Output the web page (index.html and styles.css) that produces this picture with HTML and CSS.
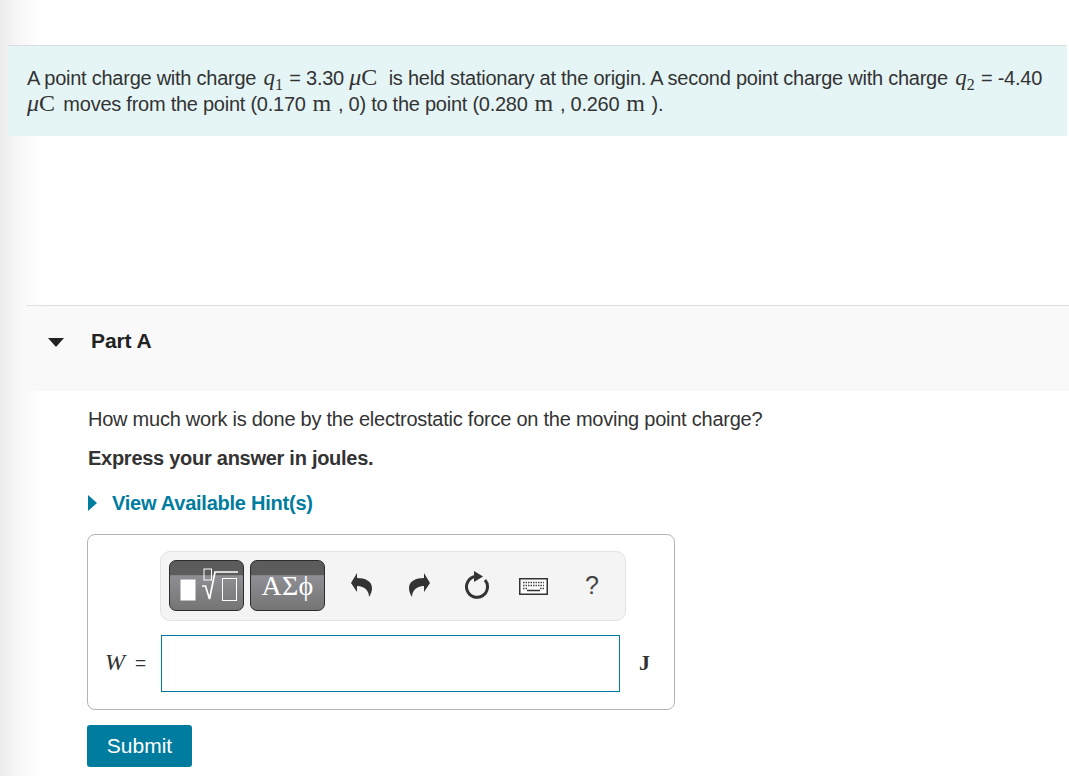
FILE: index.html
```html
<!DOCTYPE html>
<html lang="en">
<head>
    <meta charset="UTF-8">
    <title>Part A</title>
    <link rel="stylesheet" href="styles.css">
</head>
<body>
    <div class="intro">
        A point charge with charge <span class="math var"><i>q</i><sub>1</sub></span> = 3.30 <span class="math unit"><i>μ</i>C</span> is held stationary at the origin. A second point charge with charge <span class="math var"><i>q</i><sub>2</sub></span> = -4.40<br>
        <span class="math unit first"><i>μ</i>C</span> moves from the point (0.170 <span class="math metre">m</span> , 0) to the point (0.280 <span class="math metre">m</span> , 0.260 <span class="math metre">m</span> ).
    </div>

    <div class="part">
        <div class="part-head">
            <span class="part-arrow"></span>
            <h2>Part A</h2>
        </div>
        <div class="part-body">
            <p class="question">How much work is done by the electrostatic force on the moving point charge?</p>
            <p class="instruction">Express your answer in joules.</p>
            <div class="hint"><span class="hint-arrow"></span>View Available Hint(s)</div>

            <div class="answer">
                <div class="toolbar">
                    <div class="tool-btn tool-templates">
                        <svg width="73" height="49" viewBox="0 0 73 49">
                            <rect x="10.500" y="18.500" width="15" height="21" fill="#fff"/>
                            <rect x="34" y="8" width="7.500" height="11" fill="none" stroke="#fff" stroke-width="1"/>
                            <path d="M32 25l3.500 0 4 13 5.500-27h23" fill="none" stroke="#fff" stroke-width="1.700"/>
                            <rect x="52.500" y="17.500" width="14" height="22" fill="none" stroke="#fff" stroke-width="1"/>
                        </svg>
                    </div>
                    <div class="tool-btn tool-greek">ΑΣϕ</div>
                    <div class="tool-icons">
                        <svg class="icon-undo" width="21" height="24" viewBox="0 0 21 24"><path d="M0 10 6 0v5c8 0 15 3 15 10 0 3-1 6-3 9 0-6-4-11-12-11v6z" fill="#333"/></svg>
                        <svg class="icon-redo" width="21" height="24" viewBox="0 0 21 24"><path d="M21 10 15 0v5C7 5 0 8 0 15c0 3 1 6 3 9 0-6 4-11 12-11v6z" fill="#333"/></svg>
                        <svg class="icon-reset" width="26" height="28" viewBox="0 0 26 28"><path d="M11 5.500A10.500 10.500 0 1 0 21 9" fill="none" stroke="#333" stroke-width="3"/><path d="M10 0l9 5.500-9 5.500z" fill="#333"/></svg>
                        <svg class="icon-keyboard" width="29" height="17" viewBox="0 0 29 17">
                            <rect x=".75" y=".75" width="27.500" height="15.500" fill="#fff" stroke="#333" stroke-width="1.500"/>
                            <path d="M4 4.500h21M4 7.500h21M4 10.500h4M21 10.500h4" stroke="#444" stroke-width="1.500" stroke-dasharray="1.500 1"/>
                            <path d="M8 12.500h13" stroke="#333" stroke-width="1.500"/>
                        </svg>
                        <span class="icon-help">?</span>
                    </div>
                </div>
                <div class="answer-row">
                    <label class="answer-label"><i>W</i><span>=</span></label>
                    <input class="answer-input" type="text">
                    <span class="answer-unit">J</span>
                </div>
            </div>

            <button class="submit">Submit</button>
        </div>
    </div>
</body>
</html>
```

FILE: styles.css
```css
html, body {
    margin: 0;
    height: 776px;
    overflow: hidden;
}
body {
    padding: 45px 0 0 8px;
    box-sizing: border-box;
    font-family: "Liberation Sans", Arial, sans-serif;
    font-size: 20px;
    color: #333;
    letter-spacing: -0.24px;
    background: linear-gradient(to right, #ececec 0, #f6f6f6 16px, #fff 42px);
}
.intro {
    height: 91px;
    box-sizing: border-box;
    margin-right: 2px;
    padding: 19px 20px 0 19px;
    line-height: 26px;
    letter-spacing: -0.25px;
    background: #e5f5f6;
    border-top: 1px solid #ddd;
    white-space: nowrap;
}
.math {
    font-family: "Liberation Serif", "Times New Roman", serif;
    font-size: 22px;
    line-height: 0;
    letter-spacing: 0;
}
.math i {
    font-size: 23px;
}
.math sub {
    font-size: 16px;
    line-height: 0;
}
.var {
    margin: 0 1px 0 2px;
}
.unit {
    margin: 0 6px 0 0;
    font-size: 24px;
}
.unit i {
    font-size: 24px;
}
.unit.first {
    margin: 0 3px 0 0;
}
.metre {
    margin: 0 1.500px;
    font-size: 24px;
}
.part {
    margin: 169px 0 0 19px;
}
.part-head {
    display: flex;
    align-items: flex-start;
    height: 86px;
    box-sizing: border-box;
    padding-top: 23px;
    background: #f9f9f9;
    border-top: 1px solid #e0e0e0;
}
.part-arrow {
    width: 0;
    height: 0;
    margin: 9px 27px 0 21px;
    border-left: 8px solid transparent;
    border-right: 8px solid transparent;
    border-top: 9px solid #222;
}
.part-head h2 {
    margin: 0;
    font-size: 21px;
    line-height: 24px;
    font-weight: bold;
    letter-spacing: -0.1px;
    color: #222;
}
.part-body {
    padding: 16px 0 0 60px;
}
.part-body p {
    margin: 0 0 0 1px;
    line-height: 24px;
}
.instruction {
    padding-top: 15px;
    font-weight: bold;
    letter-spacing: -0.27px;
}
.hint {
    display: flex;
    align-items: center;
    margin: 21px 0 0 1px;
    line-height: 24px;
    font-weight: bold;
    color: #007c9e;
}
.hint-arrow {
    width: 0;
    height: 0;
    margin-right: 15px;
    border-top: 8px solid transparent;
    border-bottom: 8px solid transparent;
    border-left: 9px solid #007c9e;
}
.answer {
    width: 588px;
    height: 176px;
    box-sizing: border-box;
    margin-top: 19px;
    padding-top: 16px;
    background: #fff;
    border: 1px solid #b3b3b3;
    border-radius: 8px;
}
.toolbar {
    display: flex;
    align-items: center;
    width: 466px;
    height: 70px;
    box-sizing: border-box;
    margin-left: 72px;
    padding: 0 0 2px 8px;
    background: #f4f4f4;
    border: 1px solid #e2e2e2;
    border-radius: 10px;
}
.tool-btn {
    width: 75px;
    height: 51px;
    box-sizing: border-box;
    margin-right: 6px;
    background: linear-gradient(to bottom, #5c5c5c 0, #5c5c5c 28%, #8e8e94 30%, #757575 100%);
    border: 1px solid #2c2c2c;
    border-radius: 7px;
    color: #fff;
}
.tool-templates svg {
    display: block;
}
.tool-greek {
    font-family: "Liberation Serif", serif;
    font-size: 28px;
    letter-spacing: 0.3px;
    line-height: 49px;
    text-align: center;
}
.tool-icons {
    display: flex;
    align-items: center;
    margin-left: 20px;
}
.icon-redo {
    margin-left: 37px;
}
.icon-reset {
    margin-left: 34px;
}
.icon-keyboard {
    margin: 3px 0 0 29px;
}
.icon-help {
    margin-left: 37px;
    font-size: 25px;
    color: #444;
}
.answer-row {
    display: flex;
    align-items: center;
    margin-top: 14px;
}
.answer-label {
    display: flex;
    align-items: center;
    width: 73px;
    box-sizing: border-box;
    padding: 0 0 2px 17px;
    font-family: "Liberation Serif", serif;
    font-size: 24px;
    letter-spacing: 0;
}
.answer-label span {
    margin-left: 10px;
    font-family: "Liberation Sans", sans-serif;
    font-size: 19px;
}
.answer-input {
    width: 459px;
    height: 57px;
    box-sizing: border-box;
    padding: 0;
    background: #fff;
    border: 1px solid #007c9e;
    border-radius: 0;
}
.answer-unit {
    margin-left: 19px;
    padding-bottom: 2px;
    font-family: "Liberation Serif", serif;
    font-size: 22px;
    font-weight: bold;
    letter-spacing: 0;
}
.submit {
    display: block;
    width: 105px;
    height: 42px;
    margin-top: 15px;
    padding: 0;
    background: #007c9e;
    border: none;
    border-radius: 3px;
    color: #fff;
    font-family: "Liberation Sans", sans-serif;
    font-size: 21px;
}
```
